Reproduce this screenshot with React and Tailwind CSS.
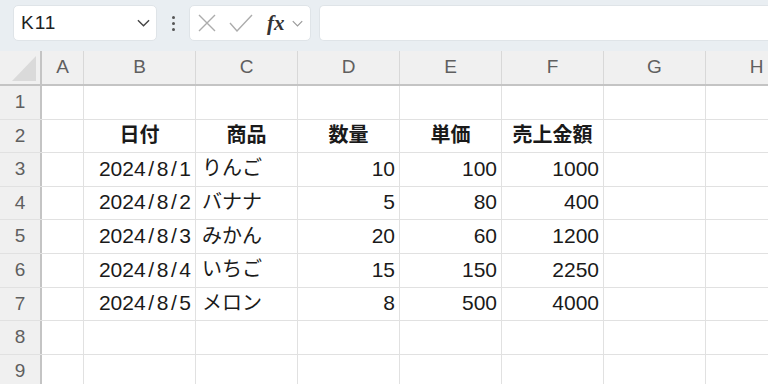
import React from 'react';

const FONT = { fontFamily: '"Liberation Sans", "Noto Sans CJK JP", sans-serif' };

const COLS = [
  { key: 'A', w: 'w-[42px]' },
  { key: 'B', w: 'w-[112px]' },
  { key: 'C', w: 'w-[102px]' },
  { key: 'D', w: 'w-[102px]' },
  { key: 'E', w: 'w-[102px]' },
  { key: 'F', w: 'w-[102px]' },
  { key: 'G', w: 'w-[102px]' },
  { key: 'H', w: 'w-[102px]' },
];

const HEAD = ['日付', '商品', '数量', '単価', '売上金額'];

const DATA = [
  ['2024/8/1', 'りんご', 10, 100, 1000],
  ['2024/8/2', 'バナナ', 5, 80, 400],
  ['2024/8/3', 'みかん', 20, 60, 1200],
  ['2024/8/4', 'いちご', 15, 150, 2250],
  ['2024/8/5', 'メロン', 8, 500, 4000],
];

function Chevron({ className }) {
  return (
    <svg viewBox="0 0 14 8" className={className} fill="none" stroke="currentColor" strokeWidth="1.5">
      <path d="M1 1l6 6 6-6" />
    </svg>
  );
}

function Date({ text }) {
  // slashes in the original font are wider than Arial's
  const parts = text.split('/');
  return (
    <span className="text-[21px]">
      {parts.map((p, i) => (
        <React.Fragment key={i}>
          {i > 0 && <span className="inline-block w-[11px] text-center">/</span>}
          {p}
        </React.Fragment>
      ))}
    </span>
  );
}

function Cell({ col, children, align = 'left' }) {
  const justify = align === 'right' ? 'justify-end pr-[4px]' : align === 'center' ? 'justify-center' : 'justify-start pl-[6px]';
  return (
    <div className={`${col.w} shrink-0 h-full border-r border-[#e1e1e1] flex items-center pb-[2px] ${justify} text-[#1a1a1a] text-[20px] whitespace-nowrap overflow-visible`}>
      {children}
    </div>
  );
}

function renderRow(r) {
  const cells = COLS.map((c) => ({ col: c, content: null, align: 'left' }));
  if (r === 2) {
    HEAD.forEach((h, i) => {
      cells[i + 1].content = <span className="font-bold">{h}</span>;
      cells[i + 1].align = 'center';
    });
  }
  if (r >= 3 && r <= 7) {
    const d = DATA[r - 3];
    cells[1].content = <Date text={d[0]} />;
    cells[1].align = 'right';
    cells[2].content = <span>{d[1]}</span>;
    cells[3].content = <span className="text-[21px]">{d[2]}</span>;
    cells[3].align = 'right';
    cells[4].content = <span className="text-[21px]">{d[3]}</span>;
    cells[4].align = 'right';
    cells[5].content = <span className="text-[21px]">{d[4]}</span>;
    cells[5].align = 'right';
  }
  return cells;
}

export default function App() {
  const rows = [1, 2, 3, 4, 5, 6, 7, 8, 9];
  return (
    <div className="w-[768px] h-[384px] overflow-hidden bg-white" style={FONT}>
      {/* formula toolbar */}
      <div className="h-[51px] bg-[#e9eef2] flex items-start pt-[5px] pl-[13px]">
        <div className="w-[144px] h-[36px] bg-white rounded-[5px] border border-[#dfe4e8] flex items-center pl-[7px] pr-[6px] justify-between">
          <span className="text-[19px] tracking-[1px] text-[#222]">K11</span>
          <Chevron className="w-[13px] h-[8px] text-[#444]" />
        </div>
        <div className="w-[32px] h-[36px] flex flex-col items-center justify-center gap-[3px]">
          <span className="w-[3px] h-[3px] rounded-full bg-[#555]" />
          <span className="w-[3px] h-[3px] rounded-full bg-[#555]" />
          <span className="w-[3px] h-[3px] rounded-full bg-[#555]" />
        </div>
        <div className="w-[122px] h-[36px] bg-white rounded-[5px] border border-[#dfe4e8] flex items-center pl-[7px]">
          <svg viewBox="0 0 20 18" className="w-[20px] h-[18px]" fill="none" stroke="#acacac" strokeWidth="1.4">
            <path d="M2 1l16 16M18 1L2 17" />
          </svg>
          <svg viewBox="0 0 24 18" className="w-[24px] h-[18px] ml-[12px]" fill="none" stroke="#acacac" strokeWidth="1.4">
            <path d="M1 9l7 8L23 1" />
          </svg>
          <span
            className="ml-[14px] text-[21px] italic font-bold text-[#333] leading-none"
            style={{ fontFamily: '"Liberation Serif", "DejaVu Serif", serif' }}
          >
            fx
          </span>
          <Chevron className="w-[11px] h-[7px] ml-[7px] text-[#9a9a9a]" />
        </div>
        <div className="flex-1 h-[36px] ml-[8px] bg-white rounded-l-[5px] border border-r-0 border-[#dfe4e8]" />
      </div>

      {/* column headers */}
      <div className="flex h-[35px] bg-[#f0f0f0] border-b-2 border-[#c4c4c4]">
        <div className="w-[42px] shrink-0 h-full border-r-2 border-[#c4c4c4] flex items-end justify-end pr-[4px] pb-[3px]">
          <svg viewBox="0 0 24 25" className="w-[24px] h-[25px]">
            <path d="M24 0L0 25h24z" fill="#dadada" />
          </svg>
        </div>
        {COLS.map((c) => (
          <div
            key={c.key}
            className={`${c.w} shrink-0 h-full border-r border-[#d8d8d8] flex items-center justify-center text-[19px] text-[#5f5f5f]`}
          >
            {c.key}
          </div>
        ))}
      </div>

      {/* rows */}
      {rows.map((r) => (
        <div key={r} className="flex h-[33.6px] border-b border-[#e1e1e1]">
          <div className="w-[42px] shrink-0 h-full bg-[#f0f0f0] border-r-2 border-[#c4c4c4] flex items-center justify-center text-[19px] text-[#5f5f5f]">
            {r}
          </div>
          {renderRow(r).map((cell) => (
            <Cell key={cell.col.key} col={cell.col} align={cell.align}>
              {cell.content}
            </Cell>
          ))}
        </div>
      ))}
    </div>
  );
}
